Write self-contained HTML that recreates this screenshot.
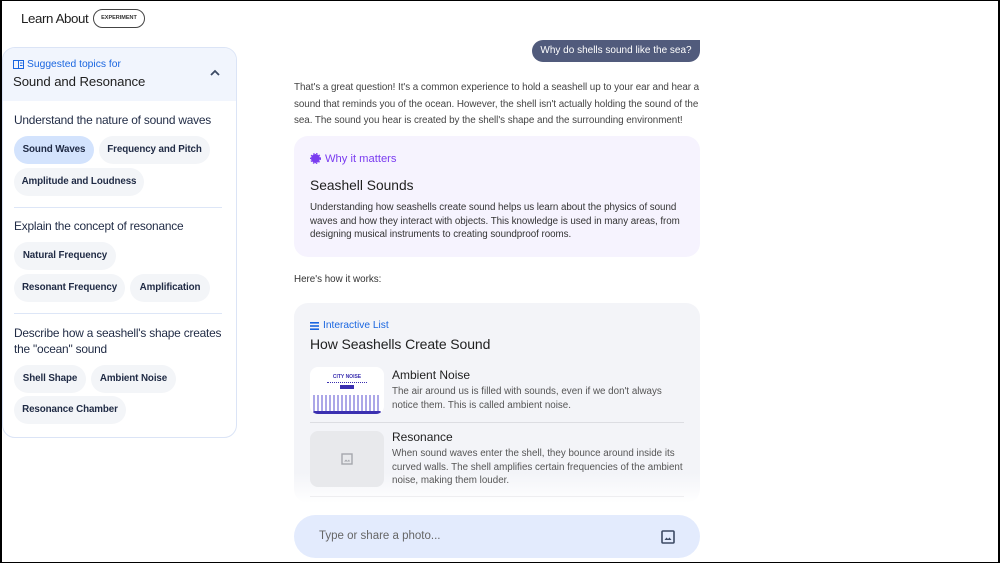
<!DOCTYPE html>
<html><head><meta charset="utf-8"><style>
*{box-sizing:border-box;margin:0;padding:0}
body{width:1000px;height:563px;overflow:hidden;background:#fff;font-family:"Liberation Sans",sans-serif;color:#1f1f1f;position:relative}
.frame{position:absolute;inset:0;border:1px solid #000;border-left-width:2px;border-right-width:2px;pointer-events:none;z-index:10}
.abs{position:absolute;white-space:nowrap}
.chip{position:absolute;height:28px;border-radius:14px;background:#f3f5f8;font-size:9.8px;color:#1f2a44;line-height:28px;text-align:center;font-weight:bold;letter-spacing:-0.1px;white-space:nowrap}
.h{position:absolute;left:14px;font-size:11.9px;color:#1f2a44;letter-spacing:-0.2px;white-space:nowrap}
.div{position:absolute;left:14px;width:208px;height:1px;background:#dde6f7}
p{position:absolute;white-space:nowrap}
</style></head><body>
<div class="frame"></div>
<div class="abs" style="left:21px;top:9px;font-size:13.3px;line-height:20px;color:#1f1f1f;letter-spacing:-0.4px">Learn About</div>
<div class="abs" style="left:93px;top:9px;width:52px;height:19px;border:1px solid #444;border-radius:10px;font-size:5.5px;font-weight:bold;text-align:center;line-height:17px;color:#333">EXPERIMENT</div>

<div class="abs" style="left:2px;top:47px;width:235px;height:391px;border:1px solid #dbe4f6;border-radius:13px;overflow:hidden">
  <div style="height:53px;background:#f1f5fd"></div>
</div>
<svg class="abs" style="left:13px;top:60px" width="11" height="9" viewBox="0 0 11 9"><rect x="0.5" y="0.5" width="10" height="8" fill="none" stroke="#1a66e0"/><line x1="5.5" y1="1" x2="5.5" y2="8" stroke="#1a66e0"/><line x1="7" y1="3" x2="9.5" y2="3" stroke="#1a66e0"/><line x1="7" y1="5.5" x2="9.5" y2="5.5" stroke="#1a66e0"/></svg>
<div class="abs" style="left:27px;top:59px;font-size:10.3px;color:#1a66e0">Suggested topics for</div>
<div class="abs" style="left:13px;top:74px;font-size:13.2px;color:#1f1f1f;letter-spacing:-0.1px">Sound and Resonance</div>
<svg class="abs" style="left:209px;top:69px" width="12" height="8" viewBox="0 0 12 8"><path d="M2 6 L6 2 L10 6" fill="none" stroke="#3c4a64" stroke-width="1.8"/></svg>

<div class="h" style="top:113px">Understand the nature of sound waves</div>
<div class="chip" style="left:14px;top:136px;width:80px;background:#d3e3fd">Sound Waves</div>
<div class="chip" style="left:99px;top:136px;width:111px">Frequency and Pitch</div>
<div class="chip" style="left:14px;top:168px;width:130px">Amplitude and Loudness</div>
<div class="div" style="top:207px"></div>
<div class="h" style="top:219px">Explain the concept of resonance</div>
<div class="chip" style="left:14px;top:242px;width:102px">Natural Frequency</div>
<div class="chip" style="left:14px;top:274px;width:111px">Resonant Frequency</div>
<div class="chip" style="left:130px;top:274px;width:80px">Amplification</div>
<div class="div" style="top:313px"></div>
<div class="h" style="top:325px;line-height:16px">Describe how a seashell's shape creates<br>the "ocean" sound</div>
<div class="chip" style="left:14px;top:365px;width:72px">Shell Shape</div>
<div class="chip" style="left:91px;top:365px;width:85px">Ambient Noise</div>
<div class="chip" style="left:14px;top:396px;width:112px">Resonance Chamber</div>

<div class="abs" style="left:532px;top:40px;width:168px;height:22px;background:#515b7c;border-radius:12px 0 12px 12px;color:#fff;font-size:10px;line-height:22px;text-align:center">Why do shells sound like the sea?</div>
<p style="left:294px;top:80px;font-size:9.85px;line-height:16.5px;color:#444;letter-spacing:-0.05px">That's a great question! It's a common experience to hold a seashell up to your ear and hear a<br>sound that reminds you of the ocean. However, the shell isn't actually holding the sound of the<br>sea. The sound you hear is created by the shell's shape and the surrounding environment!</p>

<div class="abs" style="left:294px;top:136px;width:406px;height:121px;background:#f6f3fe;border-radius:14px"></div>
<svg class="abs" style="left:310px;top:153px" width="11" height="11" viewBox="0 0 11 11"><circle cx="5.5" cy="5.5" r="4.5" fill="#7a3cf0"/><circle cx="5.5" cy="5.5" r="5" fill="none" stroke="#7a3cf0" stroke-dasharray="1.5 1.5"/></svg>
<div class="abs" style="left:325px;top:153px;font-size:11.2px;color:#7a3cf0">Why it matters</div>
<div class="abs" style="left:310px;top:178px;font-size:13.8px;color:#1f1f1f">Seashell Sounds</div>
<p style="left:310px;top:201px;font-size:9.8px;line-height:13.5px;color:#333;letter-spacing:-0.05px">Understanding how seashells create sound helps us learn about the physics of sound<br>waves and how they interact with objects. This knowledge is used in many areas, from<br>designing musical instruments to creating soundproof rooms.</p>

<div class="abs" style="left:294px;top:274px;font-size:9.8px;color:#333">Here's how it works:</div>

<div class="abs" style="left:294px;top:303px;width:406px;height:200px;border-radius:14px;background:linear-gradient(#f3f4f8 0,#f3f4f8 170px,#fff 200px)"></div>
<svg class="abs" style="left:310px;top:322px" width="9" height="8" viewBox="0 0 9 8"><rect y="0" width="9" height="1.6" fill="#1a66e0"/><rect y="3.2" width="9" height="1.6" fill="#1a66e0"/><rect y="6.4" width="9" height="1.6" fill="#1a66e0"/></svg>
<div class="abs" style="left:323px;top:320px;font-size:10.2px;color:#1a66e0">Interactive List</div>
<div class="abs" style="left:310px;top:336px;font-size:14px;color:#1f1f1f;letter-spacing:-0.1px">How Seashells Create Sound</div>

<div class="abs" style="left:310px;top:367px;width:74px;height:47px;background:#fff;border-radius:8px;overflow:hidden">
  <div style="text-align:center;font-size:5px;font-weight:bold;color:#3a2fb0;margin-top:7px">CITY NOISE</div>
  <div style="margin:2px auto 0;width:40px;height:1px;border-top:1px dotted #3a2fb0"></div>
  <div style="margin:2px auto 0;width:14px;height:4px;background:#3a2fb0"></div>
  <div style="position:absolute;left:3px;right:3px;bottom:3px;height:16px;background:repeating-linear-gradient(90deg,#5a4fd0 0 2px,transparent 2px 4px);opacity:.5"></div>
  <div style="position:absolute;left:3px;right:3px;bottom:0;height:3px;background:#3a2fb0;border-radius:3px"></div>
</div>
<div class="abs" style="left:392px;top:368px;font-size:12px;color:#1f1f1f">Ambient Noise</div>
<p style="left:392px;top:385px;font-size:9.8px;line-height:13.5px;color:#555">The air around us is filled with sounds, even if we don't always<br>notice them. This is called ambient noise.</p>
<div class="abs" style="left:310px;top:422px;width:374px;height:1px;background:#dcdde2"></div>
<div class="abs" style="left:310px;top:431px;width:74px;height:56px;background:#e8e9ec;border-radius:8px"></div>
<svg class="abs" style="left:341px;top:453px" width="12" height="12" viewBox="0 0 12 12"><rect x="1" y="1" width="10" height="10" fill="none" stroke="#a5a7ad" stroke-width="1.4"/><path d="M3 8.5 L5 6.5 L6.5 8 L8 6.5 L9 8.5Z" fill="#a5a7ad"/></svg>
<div class="abs" style="left:392px;top:430px;font-size:12px;color:#1f1f1f">Resonance</div>
<p style="left:392px;top:447px;font-size:9.8px;line-height:13.5px;color:#555">When sound waves enter the shell, they bounce around inside its<br>curved walls. The shell amplifies certain frequencies of the ambient<br>noise, making them louder.</p>
<div class="abs" style="left:310px;top:496px;width:374px;height:1px;background:#eeeef0"></div>

<div class="abs" style="left:294px;top:515px;width:406px;height:43px;background:#e3ebfd;border-radius:22px"></div>
<div class="abs" style="left:319px;top:530px;font-size:11.5px;color:#666">Type or share a photo...</div>
<svg class="abs" style="left:661px;top:530px" width="14" height="14" viewBox="0 0 14 14"><rect x="1" y="1" width="12" height="12" rx="1" fill="none" stroke="#3c4a64" stroke-width="1.6"/><path d="M3.5 10 L5.5 7.5 L7 9 L8.5 7.5 L10.5 10Z" fill="#3c4a64"/></svg>
</body></html>
